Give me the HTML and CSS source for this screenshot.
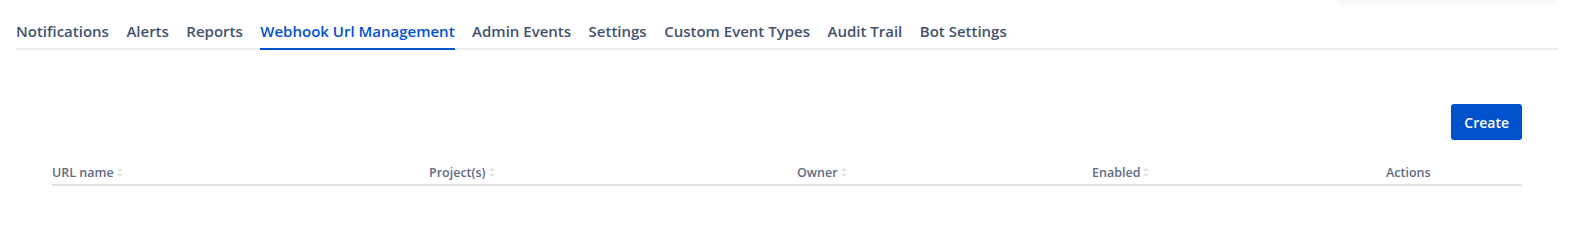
FILE: index.html
```html
<!DOCTYPE html>
<html lang="en">
<head>
  <meta charset="UTF-8">
  <title>Webhook Url Management</title>
  <link rel="stylesheet" href="styles.css">
</head>
<body>

  <!-- faint panel peeking at the top right -->
  <div class="top-shadow"></div>

  <!-- Tabs -->
  <nav class="tabs">
    <a class="tab">Notifications</a>
    <a class="tab">Alerts</a>
    <a class="tab">Reports</a>
    <a class="tab active">Webhook Url Management</a>
    <a class="tab">Admin Events</a>
    <a class="tab">Settings</a>
    <a class="tab">Custom Event Types</a>
    <a class="tab">Audit Trail</a>
    <a class="tab">Bot Settings</a>
  </nav>

  <div class="panel">
    <div class="toolbar">
      <button class="create-btn">Create</button>
    </div>

    <div class="table-head">
      <div class="th">URL name <span class="sort"></span></div>
      <div class="th">Project(s) <span class="sort"></span></div>
      <div class="th">Owner <span class="sort"></span></div>
      <div class="th">Enabled <span class="sort"></span></div>
      <div class="th">Actions</div>
    </div>
  </div>

</body>
</html>
```

FILE: styles.css
```css
body {
  margin: 0;
  padding: 0 14px 0 16px;
  font-family: "Open Sans", "Noto Sans", sans-serif;
  background-color: #fff;
  color: #42526e;
}

.top-shadow {
  position: absolute;
  top: -10px;
  left: 1337px;
  width: 220px;
  height: 17px;
  border-radius: 8px;
  background-color: #fafafa;
}

.tabs {
  display: flex;
  gap: 17.5px;
  padding-top: 21px;
  border-bottom: 2px solid #ebecf0;
}

.tab {
  font-size: 15px;
  line-height: 20px;
  font-weight: 600;
  color: #42526e;
  padding-bottom: 7px;
  margin-bottom: -2px;
  border-bottom: 2px solid transparent;
  cursor: pointer;
}

.tab.active {
  color: #0052cc;
  border-bottom-color: #0052cc;
}

.panel {
  padding: 0 37px 0 36px;
}

.toolbar {
  display: flex;
  justify-content: flex-end;
  padding-top: 54px;
}

.create-btn {
  font-family: inherit;
  font-size: 14px;
  font-weight: 600;
  color: #fff;
  background-color: #0052cc;
  border: none;
  border-radius: 3px;
  height: 36px;
  padding: 0 13px;
  cursor: pointer;
}

.table-head {
  display: grid;
  grid-template-columns: 377px 368px 295px 294px 1fr;
  margin-top: 22px;
  padding-bottom: 2px;
  border-bottom: 2px solid #dfe1e6;
}

.th {
  font-size: 12.5px;
  font-weight: 600;
  color: #5e6c84;
  display: flex;
  align-items: center;
  gap: 3px;
  height: 20px;
}

.sort {
  display: inline-block;
  width: 6px;
  height: 9px;
  position: relative;
}

.sort::before,
.sort::after {
  content: "";
  position: absolute;
  left: 0;
  border-left: 3px solid transparent;
  border-right: 3px solid transparent;
}

.sort::before {
  top: 0;
  border-bottom: 3px solid #dfe1e6;
}

.sort::after {
  bottom: 0;
  border-top: 3px solid #dfe1e6;
}
```
